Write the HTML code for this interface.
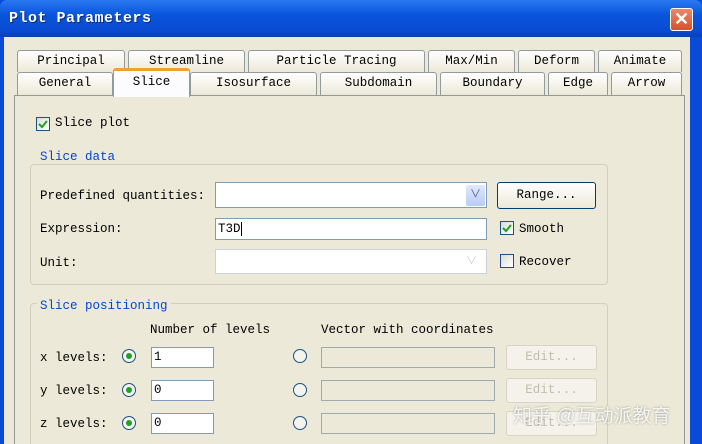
<!DOCTYPE html>
<html><head><meta charset="utf-8"><style>
*{margin:0;padding:0;box-sizing:border-box}
html,body{width:702px;height:444px;overflow:hidden}
body{background:#0a4ad8;font-family:"Liberation Mono","Noto Sans CJK SC",monospace;font-size:12.5px;color:#000;position:relative}
.a{position:absolute}
.win{left:4px;top:37px;width:686px;height:407px;background:#ece9d8}
.title{left:0;top:0;width:702px;height:37px;background:linear-gradient(#2a78f0,#0855dc 40%,#0a4ad0 85%,#0840b8);border-radius:7px 7px 0 0}
.tt{left:9px;top:10px;color:#fff;font-weight:bold;font-size:15px;letter-spacing:.5px;text-shadow:1px 1px #0a2a80}
.close{left:670px;top:8px;width:23px;height:23px;background:linear-gradient(#e8886a,#d8502c);border:1px solid #fff;border-radius:3px;color:#fff;font:bold 18px "Liberation Sans",sans-serif;text-align:center;line-height:20px}
.tab{background:linear-gradient(#fff,#ece9d8);border:1px solid #919b9c;border-bottom:none;border-radius:3px 3px 0 0;text-align:center;line-height:20px}
.panel{left:14px;top:95px;width:671px;height:349px;background:#ece9d8;border:1px solid #919b9c;border-bottom:none}
.grp{border:1px solid #d0d0bf;border-radius:4px}
.gl{color:#0046d5;background:#ece9d8;padding:0 3px}
.inp{background:#fff;border:1px solid #7f9db9}
.dis{background:#ece9d8;border:1px solid #a0a8b0}
.btn{border:1px solid #003c74;border-radius:3px;background:linear-gradient(#fff,#ece9d8);text-align:center;line-height:24px}
.ebtn{border:1px solid #d8d4c4;border-radius:3px;background:#f4f2ea;color:#c0beb0;text-align:center;line-height:22px}
.cb{width:14px;height:14px;border:1px solid #1c5180;background:linear-gradient(135deg,#dcdcd4,#fff)}
.rad{width:14px;height:14px;border:1px solid #1c5180;border-radius:50%;background:#f4f4ee}
.dot{position:absolute;left:3px;top:3px;width:6px;height:6px;border-radius:50%;background:#21a121}
</style></head><body>
<div class="a title"></div>
<div class="a tt">Plot Parameters</div>
<div class="a close">✕</div>
<div class="a win"></div>
<div class="a panel"></div>
<div class="a tab" style="left:17px;top:50px;width:108px;height:22px">Principal</div>
<div class="a tab" style="left:128px;top:50px;width:117px;height:22px">Streamline</div>
<div class="a tab" style="left:248px;top:50px;width:177px;height:22px">Particle Tracing</div>
<div class="a tab" style="left:428px;top:50px;width:87px;height:22px">Max/Min</div>
<div class="a tab" style="left:518px;top:50px;width:77px;height:22px">Deform</div>
<div class="a tab" style="left:598px;top:50px;width:84px;height:22px">Animate</div>
<div class="a tab" style="left:17px;top:72px;width:96px;height:23px">General</div>
<div class="a tab" style="left:190px;top:72px;width:127px;height:23px">Isosurface</div>
<div class="a tab" style="left:320px;top:72px;width:117px;height:23px">Subdomain</div>
<div class="a tab" style="left:440px;top:72px;width:105px;height:23px">Boundary</div>
<div class="a tab" style="left:548px;top:72px;width:60px;height:23px">Edge</div>
<div class="a tab" style="left:611px;top:72px;width:71px;height:23px">Arrow</div>
<div class="a" style="left:113px;top:68px;width:77px;height:29px;background:#fcfcfe;border:1px solid #919b9c;border-top:3px solid #f0a030;border-bottom:none;border-radius:3px 3px 0 0;text-align:center;line-height:22px">Slice</div>
<div class="a cb" style="left:36px;top:117px"><svg width="12" height="12" style="position:absolute;left:0;top:0"><path d="M2 6 L5 9 L10 3" stroke="#21a121" stroke-width="2" fill="none"/></svg></div>
<div class="a" style="left:55px;top:116px">Slice plot</div>
<div class="a grp" style="left:30px;top:164px;width:578px;height:121px"></div>
<div class="a gl" style="left:37px;top:150px">Slice data</div>
<div class="a" style="left:40px;top:189px">Predefined quantities:</div>
<div class="a inp" style="left:215px;top:182px;width:272px;height:26px"></div>
<div class="a" style="left:466px;top:185px;width:19px;height:21px;background:linear-gradient(#e0e8fc,#b8ccf4);border-radius:2px;color:#4d6185;font-size:11px;text-align:center;line-height:21px">∨</div>
<div class="a btn" style="left:497px;top:182px;width:99px;height:27px">Range...</div>
<div class="a" style="left:40px;top:222px">Expression:</div>
<div class="a inp" style="left:215px;top:218px;width:272px;height:22px;padding-left:2px;line-height:20px">T3D<span style="border-left:1px solid #000"></span></div>
<div class="a cb" style="left:500px;top:221px"><svg width="12" height="12" style="position:absolute;left:0;top:0"><path d="M2 6 L5 9 L10 3" stroke="#21a121" stroke-width="2" fill="none"/></svg></div>
<div class="a" style="left:519px;top:222px">Smooth</div>
<div class="a" style="left:40px;top:256px">Unit:</div>
<div class="a" style="left:215px;top:249px;width:272px;height:25px;background:#fff;border:1px solid #c9d3dc"></div>
<div class="a" style="left:466px;top:252px;color:#c9cfd6;font-size:11px">∨</div>
<div class="a cb" style="left:500px;top:254px"></div>
<div class="a" style="left:519px;top:255px">Recover</div>
<div class="a grp" style="left:30px;top:303px;width:578px;height:160px"></div>
<div class="a gl" style="left:37px;top:299px">Slice positioning</div>
<div class="a" style="left:150px;top:323px">Number of levels</div>
<div class="a" style="left:321px;top:323px">Vector with coordinates</div>
<div class="a" style="left:40px;top:351px">x levels:</div>
<div class="a rad" style="left:122px;top:349px"><div class="dot"></div></div>
<div class="a inp" style="left:151px;top:347px;width:63px;height:21px;padding-left:2px;line-height:19px">1</div>
<div class="a rad" style="left:293px;top:349px"></div>
<div class="a dis" style="left:321px;top:347px;width:174px;height:21px"></div>
<div class="a ebtn" style="left:506px;top:345px;width:91px;height:25px">Edit...</div>
<div class="a" style="left:40px;top:384px">y levels:</div>
<div class="a rad" style="left:122px;top:383px"><div class="dot"></div></div>
<div class="a inp" style="left:151px;top:380px;width:63px;height:21px;padding-left:2px;line-height:19px">0</div>
<div class="a rad" style="left:293px;top:383px"></div>
<div class="a dis" style="left:321px;top:380px;width:174px;height:21px"></div>
<div class="a ebtn" style="left:506px;top:378px;width:91px;height:25px">Edit...</div>
<div class="a" style="left:40px;top:417px">z levels:</div>
<div class="a rad" style="left:122px;top:416px"><div class="dot"></div></div>
<div class="a inp" style="left:151px;top:413px;width:63px;height:21px;padding-left:2px;line-height:19px">0</div>
<div class="a rad" style="left:293px;top:416px"></div>
<div class="a dis" style="left:321px;top:413px;width:174px;height:21px"></div>
<div class="a ebtn" style="left:506px;top:411px;width:91px;height:25px">Edit...</div>
<div class="a" style="left:513px;top:401px;color:rgba(255,255,255,.85);font-family:'Liberation Sans','Noto Sans CJK SC',sans-serif;font-size:19px;text-shadow:0 0 2px rgba(0,0,0,.35)">知乎 @互动派教育</div>
</body></html>
